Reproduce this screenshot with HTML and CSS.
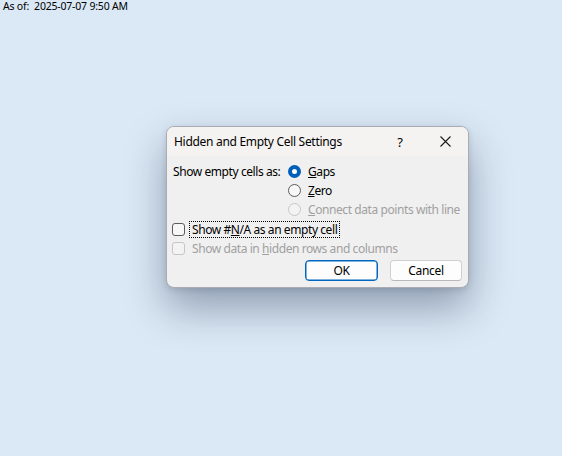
FILE: index.html
```html
<!DOCTYPE html>
<html lang="en">
<head>
<meta charset="utf-8">
<title>Hidden and Empty Cell Settings</title>
<link rel="stylesheet" href="styles.css">
</head>
<body>
<div class="asof">As of:&nbsp;&nbsp;2025-07-07 9:50 AM</div>
<div class="dialog">
  <div class="titlebar">
    <span class="title">Hidden and Empty Cell Settings</span>
    <span class="help">?</span>
    <span class="close">
      <svg width="11" height="11" viewBox="0 0 11 11"><path d="M0.5 0.5 L10.5 10.5 M10.5 0.5 L0.5 10.5" stroke="#1a1a1a" stroke-width="1.1" fill="none"/></svg>
    </span>
  </div>
  <div class="content">
    <div class="group">
      <div class="glabel">Show empty cells as:</div>
      <div class="radios">
        <div class="row"><span class="radio checked"></span><span><u>G</u>aps</span></div>
        <div class="row"><span class="radio"></span><span><u>Z</u>ero</span></div>
        <div class="row disabled"><span class="radio"></span><span><u>C</u>onnect data points with line</span></div>
      </div>
    </div>
    <div class="row check-row first"><span class="check"></span><span class="focus">Show #<u>N</u>/A as an empty cell</span></div>
    <div class="row check-row disabled"><span class="check"></span><span class="plain">Show data in <u>h</u>idden rows and columns</span></div>
    <div class="buttons">
      <button class="btn default">OK</button>
      <button class="btn">Cancel</button>
    </div>
  </div>
</div>
</body>
</html>
```
FILE: styles.css
```css
html, body {
  margin: 0;
  padding: 0;
}
body {
  width: 562px;
  height: 456px;
  background: #dbe8f5;
  font-family: "Noto Sans", "Open Sans", sans-serif;
  color: #000;
  overflow: hidden;
  white-space: nowrap;
}
.asof {
  font-size: 10.5px;
  line-height: 12px;
  height: 12px;
  padding-left: 3px;
  letter-spacing: -0.2px;
}
.dialog {
  margin: 114px 0 0 166px;
  width: 303px;
  height: 162px;
  box-sizing: border-box;
  border: 1px solid #a9adb3;
  border-radius: 8px;
  background: #f0f0f0;
  box-shadow: 0 20px 40px rgba(20, 40, 70, 0.38), 0 2px 6px rgba(0,0,0,0.12);
  overflow: hidden;
}
.titlebar {
  height: 29px;
  background: #f5f3f1;
  display: flex;
  align-items: center;
  padding-left: 7px;
  font-size: 12px;
}
.title {
  flex: 1;
  letter-spacing: -0.3px;
}
.help {
  width: 12px;
  font-size: 13px;
  margin-right: 34px;
  text-align: center;
}
.close {
  display: flex;
  width: 11px;
  height: 11px;
  margin-right: 17px;
}
.content {
  padding: 6px 6px 0 6px;
  font-size: 12px;
  letter-spacing: -0.42px;
}
.group {
  display: flex;
}
.glabel {
  width: 115px;
  flex-shrink: 0;
  height: 19px;
  line-height: 19px;
}
.radios {
  display: flex;
  flex-direction: column;
  flex-shrink: 0;
}
.row {
  display: flex;
  align-items: center;
  height: 19px;
  gap: 7px;
}
.disabled {
  color: #a0a0a0;
}
.radio {
  width: 13px;
  height: 13px;
  flex-shrink: 0;
  box-sizing: border-box;
  border: 1px solid #5c5c5c;
  border-radius: 50%;
  background: #f7f7f7;
}
.radio.checked {
  border: 4px solid #005fb8;
  background: #ffffff;
}
.disabled .radio {
  border-color: #c6c6c6;
  background: #f3f3f3;
}
.check-row {
  gap: 5px;
  margin-left: -1px;
}
.check-row.first {
  margin-top: 1px;
}
.check {
  width: 13px;
  height: 13px;
  flex-shrink: 0;
  box-sizing: border-box;
  border: 1px solid #5c5c5c;
  border-radius: 3px;
  background: #f7f7f7;
}
.disabled .check {
  border-color: #c6c6c6;
  background: #f3f3f3;
}
.focus {
  outline: 1px dotted #000;
  outline-offset: 0;
  padding: 0 2px;
  height: 15px;
  line-height: 15px;
}
.plain {
  padding-left: 2px;
}
.buttons {
  display: flex;
  justify-content: flex-end;
  gap: 12px;
  margin-top: 2px;
}
.btn {
  width: 72px;
  height: 21px;
  box-sizing: border-box;
  font-family: inherit;
  font-size: 12px;
  letter-spacing: -0.3px;
  border: 1px solid #d0d0d0;
  border-bottom-color: #b8b8b8;
  border-radius: 4px;
  background: #fdfdfd;
  color: #000;
  padding: 0;
  line-height: 18px;
}
.btn.default {
  width: 73px;
  border: 1px solid #0067c0;
  box-shadow: inset 0 0 0 0.5px #0067c0;
}
```
